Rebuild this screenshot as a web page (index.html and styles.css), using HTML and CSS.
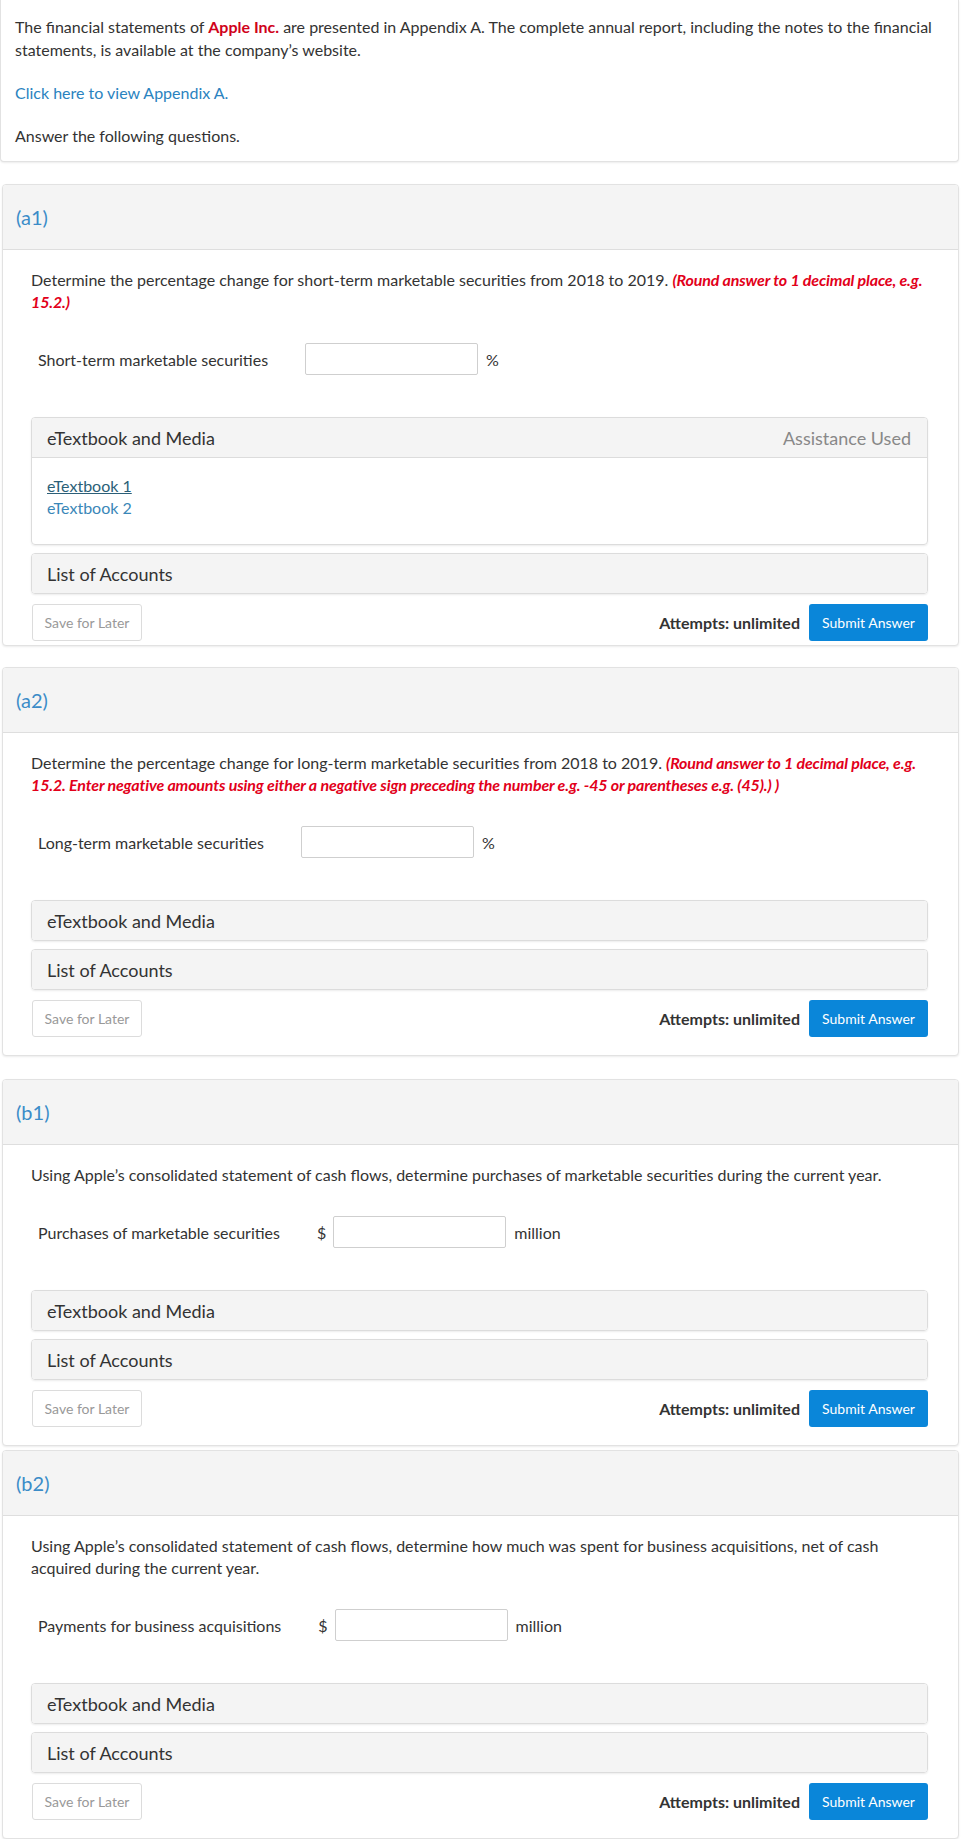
FILE: index.html
```html
<!DOCTYPE html>
<html lang="en">
<head>
    <meta charset="UTF-8">
    <meta name="viewport" content="width=device-width, initial-scale=1.0">
    <title>Apple Inc. - Marketable Securities</title>
    <link rel="stylesheet" href="styles.css">
</head>
<body>

<div class="page">

    <div class="card intro">
        <p>The financial statements of <b class="red">Apple Inc.</b> are presented in Appendix A. The complete annual report, including the notes to the financial statements, is available at the company&rsquo;s website.</p>
        <p><a href="#" class="link">Click here to view Appendix A.</a></p>
        <p>Answer the following questions.</p>
    </div>

    <!-- (a1) -->
    <div class="card question q-a1">
        <div class="q-head">(a1)</div>
        <div class="q-body">
            <p class="q-text">Determine the percentage change for short-term marketable securities from 2018 to 2019. <em class="hint">(Round answer to 1 decimal place, e.g. 15.2.)</em></p>
            <div class="answer-row">
                <label>Short-term marketable securities</label>
                <input type="text" class="answer">
                <span class="unit">%</span>
            </div>
            <div class="panel open">
                <div class="panel-head">
                    <span>eTextbook and Media</span>
                    <span class="used">Assistance Used</span>
                </div>
                <div class="panel-body">
                    <a href="#" class="book visited">eTextbook 1</a>
                    <a href="#" class="book">eTextbook 2</a>
                </div>
            </div>
            <div class="panel">
                <div class="panel-head"><span>List of Accounts</span></div>
            </div>
            <div class="actions">
                <button class="btn-save">Save for Later</button>
                <div class="submit-wrap">
                    <span class="attempts">Attempts: unlimited</span>
                    <button class="btn-submit">Submit Answer</button>
                </div>
            </div>
        </div>
    </div>

    <!-- (a2) -->
    <div class="card question q-a2">
        <div class="q-head">(a2)</div>
        <div class="q-body">
            <p class="q-text">Determine the percentage change for long-term marketable securities from 2018 to 2019. <em class="hint">(Round answer to 1 decimal place, e.g. 15.2. Enter negative amounts using either a negative sign preceding the number e.g. -45 or parentheses e.g. (45).) )</em></p>
            <div class="answer-row">
                <label>Long-term marketable securities</label>
                <input type="text" class="answer">
                <span class="unit">%</span>
            </div>
            <div class="panel">
                <div class="panel-head"><span>eTextbook and Media</span></div>
            </div>
            <div class="panel">
                <div class="panel-head"><span>List of Accounts</span></div>
            </div>
            <div class="actions">
                <button class="btn-save">Save for Later</button>
                <div class="submit-wrap">
                    <span class="attempts">Attempts: unlimited</span>
                    <button class="btn-submit">Submit Answer</button>
                </div>
            </div>
        </div>
    </div>

    <!-- (b1) -->
    <div class="card question q-b1">
        <div class="q-head">(b1)</div>
        <div class="q-body">
            <p class="q-text">Using Apple&rsquo;s consolidated statement of cash flows, determine purchases of marketable securities during the current year.</p>
            <div class="answer-row">
                <label>Purchases of marketable securities</label>
                <span class="cur">$</span>
                <input type="text" class="answer">
                <span class="unit">million</span>
            </div>
            <div class="panel">
                <div class="panel-head"><span>eTextbook and Media</span></div>
            </div>
            <div class="panel">
                <div class="panel-head"><span>List of Accounts</span></div>
            </div>
            <div class="actions">
                <button class="btn-save">Save for Later</button>
                <div class="submit-wrap">
                    <span class="attempts">Attempts: unlimited</span>
                    <button class="btn-submit">Submit Answer</button>
                </div>
            </div>
        </div>
    </div>

    <!-- (b2) -->
    <div class="card question q-b2">
        <div class="q-head">(b2)</div>
        <div class="q-body">
            <p class="q-text">Using Apple&rsquo;s consolidated statement of cash flows, determine how much was spent for business acquisitions, net of cash acquired during the current year.</p>
            <div class="answer-row">
                <label>Payments for business acquisitions</label>
                <span class="cur">$</span>
                <input type="text" class="answer">
                <span class="unit">million</span>
            </div>
            <div class="panel">
                <div class="panel-head"><span>eTextbook and Media</span></div>
            </div>
            <div class="panel">
                <div class="panel-head"><span>List of Accounts</span></div>
            </div>
            <div class="actions">
                <button class="btn-save">Save for Later</button>
                <div class="submit-wrap">
                    <span class="attempts">Attempts: unlimited</span>
                    <button class="btn-submit">Submit Answer</button>
                </div>
            </div>
        </div>
    </div>

</div>

</body>
</html>
```

FILE: styles.css
```css
body {
    font-family: 'Lato', 'Open Sans', sans-serif;
    font-size: 16px;
    color: #333;
    background: #fff;
    margin: 0;
}
.page {
    width: 957px;
    margin-left: 2px;
}
.card {
    background: #fff;
    border: 1px solid #e2e2e2;
    border-radius: 4px;
    box-shadow: 0 1px 2px rgba(0, 0, 0, 0.08);
}
.intro {
    border-top: none;
    border-radius: 0 0 4px 4px;
    margin-left: -2px;
    padding: 15px 14px 2px 14px;
}
.intro p {
    line-height: 23px;
    margin: 0 0 20px;
}
.intro p:last-child {
    margin-bottom: 12px;
}
.red {
    color: #d0021b;
}
.link {
    color: #2a83c0;
    text-decoration: none;
}

.question {
    overflow: hidden;
}
.q-a1 { margin-top: 22px; }
.q-a2 { margin-top: 21px; }
.q-b1 { margin-top: 23px; }
.q-b2 { margin-top: 4px; }

.q-head {
    background: #f4f4f4;
    border-bottom: 1px solid #dedede;
    color: #3b8cc8;
    font-size: 20px;
    line-height: 24px;
    padding: 20px 13px 20px;
}
.q-body {
    padding: 19px 30px 18px 28px;
}
.q-a1 .q-body {
    padding-bottom: 4px;
}
.q-text {
    margin: 0;
    line-height: 22px;
}
.hint {
    color: #e2001a;
    font-weight: bold;
    letter-spacing: -0.15px;
}
.answer-row {
    display: flex;
    align-items: center;
    height: 32px;
    margin: 30px 0 42px;
    padding-left: 7px;
}
.answer-row label {
    margin-right: 37px;
}
.cur {
    margin-right: 7px;
}
.answer {
    width: 173px;
    height: 32px;
    box-sizing: border-box;
    border: 1px solid #cfcfcf;
    border-radius: 2px;
    margin: 0;
}
.unit {
    margin-left: 8px;
}

.panel {
    border: 1px solid #dcdcdc;
    border-radius: 4px;
    box-shadow: 0 1px 2px rgba(0, 0, 0, 0.08);
    margin-bottom: 8px;
    overflow: hidden;
}
.panel-head {
    background: #f4f4f4;
    height: 39px;
    display: flex;
    align-items: center;
    justify-content: space-between;
    padding: 0 16px 0 15px;
    font-size: 18px;
}
.open .panel-head {
    border-bottom: 1px solid #dcdcdc;
}
.used {
    color: #888;
}
.panel-body {
    padding: 17px 15px 25px;
}
.book {
    display: block;
    color: #3a87b8;
    font-size: 16px;
    line-height: 22px;
    text-decoration: none;
}
.book.visited {
    color: #2b5f78;
    text-decoration: underline;
}

.actions {
    display: flex;
    justify-content: space-between;
    align-items: center;
    margin-top: 10px;
}
.btn-save {
    font-family: inherit;
    background: #fff;
    border: 1px solid #dcdcdc;
    border-radius: 3px;
    color: #999;
    font-size: 14px;
    width: 110px;
    height: 37px;
    margin-left: 1px;
}
.submit-wrap {
    display: flex;
    align-items: center;
}
.attempts {
    font-weight: bold;
    margin-right: 9px;
    color: #333;
}
.btn-submit {
    font-family: inherit;
    background: #0a86d9;
    color: #fff;
    border: none;
    border-radius: 3px;
    font-size: 14px;
    width: 119px;
    height: 37px;
}
```
